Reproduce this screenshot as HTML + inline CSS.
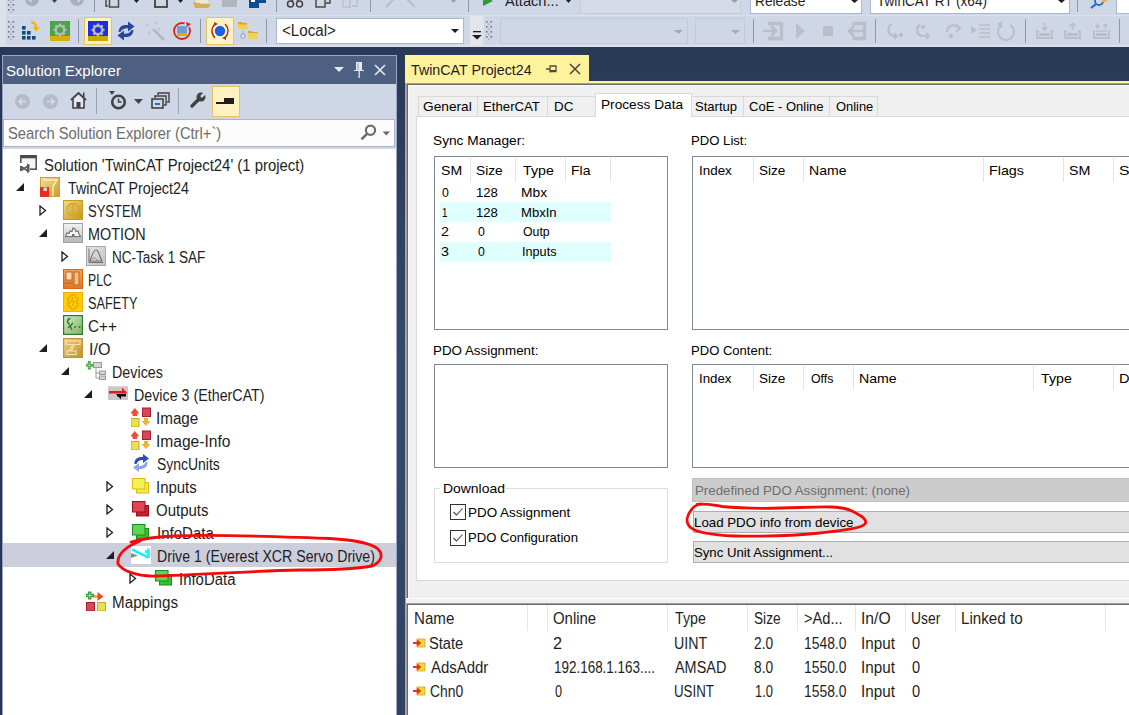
<!DOCTYPE html><html><head><meta charset="utf-8"><style>
html,body{margin:0;padding:0}body{width:1129px;height:715px;overflow:hidden;position:relative;background:linear-gradient(to bottom,#293955 30px,#35496A 360px,#35496A 480px,#314262 715px);font-family:"Liberation Sans",sans-serif}
.t{position:absolute;white-space:pre;line-height:1;}
.b{position:absolute;}
</style></head><body>
<div class="b" style="left:0px;top:0px;width:1129px;height:47px;background:#DCE0EB"></div>
<div class="b" style="left:6px;top:0px;width:574px;height:14.5px;background:#CFD6E5"></div>
<div class="b" style="left:588px;top:0px;width:541px;height:14.5px;background:#CFD6E5"></div>
<div class="b" style="left:6px;top:16px;width:464px;height:29px;background:#CFD6E5"></div>
<div class="b" style="left:470px;top:16px;width:12px;height:29px;background:#E2E5EE"></div>
<div class="b" style="left:484px;top:16px;width:645px;height:29px;background:#CFD6E5"></div>
<svg class="b" style="left:8px;top:-1px;" width="7" height="15" viewBox="0 0 7 15"><rect x="0" y="0" width="1.6" height="1.6" fill="#6F7890"/><rect x="4.5" y="0" width="1.6" height="1.6" fill="#6F7890"/><rect x="2.2" y="2.5" width="1.6" height="1.6" fill="#A9B0C2"/><rect x="0" y="5" width="1.6" height="1.6" fill="#6F7890"/><rect x="4.5" y="5" width="1.6" height="1.6" fill="#6F7890"/><rect x="2.2" y="7.5" width="1.6" height="1.6" fill="#A9B0C2"/><rect x="0" y="10" width="1.6" height="1.6" fill="#6F7890"/><rect x="4.5" y="10" width="1.6" height="1.6" fill="#6F7890"/><rect x="2.2" y="12.5" width="1.6" height="1.6" fill="#A9B0C2"/></svg>
<svg class="b" style="left:24px;top:-9px;" width="16" height="16" viewBox="0 0 16 16"><circle cx="8" cy="8" r="7" fill="#A9AFBB"/><path d="M12 8 H4.5 M7.5 5 L4.5 8 L7.5 11" stroke="#D3D8E2" stroke-width="1.8" fill="none"/></svg>
<svg class="b" style="left:52px;top:0px;" width="6" height="4" viewBox="0 0 6 4"><path d="M0 0 H5 L2.5 3 Z" fill="#424242"/></svg>
<svg class="b" style="left:69px;top:-9px;" width="16" height="16" viewBox="0 0 16 16"><circle cx="8" cy="8" r="7" fill="#A9AFBB"/><path d="M4 8 H11.5 M8.5 5 L11.5 8 L8.5 11" stroke="#D3D8E2" stroke-width="1.8" fill="none"/></svg>
<div class="b" style="left:94px;top:0px;width:1px;height:12px;background:#8E96A8"></div>
<svg class="b" style="left:105px;top:0px;" width="16" height="9" viewBox="0 0 16 9"><path d="M1 0 V6 H3" stroke="#424242" stroke-width="1.4" fill="none"/><rect x="4.5" y="-2" width="9" height="9" fill="#D3D6DE" stroke="#424242" stroke-width="1.4"/></svg>
<svg class="b" style="left:134px;top:0px;" width="6" height="4" viewBox="0 0 6 4"><path d="M0 0 H5 L2.5 3 Z" fill="#1E1E1E"/></svg>
<svg class="b" style="left:154px;top:-2px;" width="14" height="10" viewBox="0 0 14 10"><rect x="1" y="0" width="12" height="9" fill="#D3D6DE" stroke="#424242" stroke-width="1.8"/></svg>
<svg class="b" style="left:178px;top:0px;" width="6" height="4" viewBox="0 0 6 4"><path d="M0 0 H5 L2.5 3 Z" fill="#1E1E1E"/></svg>
<svg class="b" style="left:193px;top:-2px;" width="19" height="11" viewBox="0 0 19 11"><path d="M0 4 H6 L8 6 H18 L15 10 H2 Z" fill="#DDAA5A"/><rect x="3" y="0" width="12" height="5" fill="#EEE6D6"/></svg>
<svg class="b" style="left:222px;top:-2px;" width="15" height="10" viewBox="0 0 15 10"><rect x="0" y="0" width="15" height="9" fill="#B0B5C0"/></svg>
<svg class="b" style="left:249px;top:-2px;" width="18" height="11" viewBox="0 0 18 11"><rect x="0" y="0" width="10" height="10" fill="#0E4C92"/><rect x="2" y="0" width="4" height="4" fill="#FFFFFF"/><rect x="10" y="0" width="7" height="5" fill="#0E4C92"/></svg>
<div class="b" style="left:276px;top:0px;width:1px;height:12px;background:#8E96A8"></div>
<svg class="b" style="left:286px;top:-2px;" width="18" height="11" viewBox="0 0 18 11"><circle cx="4.5" cy="6" r="3" stroke="#424242" stroke-width="1.5" fill="none"/><circle cx="13.5" cy="6" r="3" stroke="#424242" stroke-width="1.5" fill="none"/><path d="M6 3 L9 -2 M12 3 L9 -2" stroke="#424242" stroke-width="1.5"/></svg>
<svg class="b" style="left:315px;top:-2px;" width="18" height="11" viewBox="0 0 18 11"><rect x="1" y="0" width="9" height="9" fill="#D3D6DE" stroke="#424242" stroke-width="1.4"/><path d="M11 5 H15 V-1" stroke="#424242" stroke-width="1.4" fill="none"/></svg>
<svg class="b" style="left:342px;top:-2px;" width="18" height="11" viewBox="0 0 18 11"><rect x="1" y="1" width="7" height="8" fill="none" stroke="#B8BDC8" stroke-width="1.3"/><path d="M10 8 H15 V0" stroke="#B8BDC8" stroke-width="1.3" fill="none"/></svg>
<div class="b" style="left:370px;top:0px;width:1px;height:12px;background:#8E96A8"></div>
<svg class="b" style="left:384px;top:-3px;" width="40" height="12" viewBox="0 0 40 12"><path d="M2 10 L10 2" stroke="#B8BDC8" stroke-width="2.2"/><path d="M23 2 L31 10" stroke="#B8BDC8" stroke-width="2.2"/><path d="M15 0 L19 0 L17 3 Z" fill="#9A9FAA"/></svg>
<svg class="b" style="left:451px;top:0px;" width="6" height="4" viewBox="0 0 6 4"><path d="M0 0 H5 L2.5 3 Z" fill="#9A9FAA"/></svg>
<div class="b" style="left:468px;top:0px;width:1px;height:12px;background:#8E96A8"></div>
<svg class="b" style="left:483px;top:-4px;" width="10" height="11" viewBox="0 0 10 11"><path d="M0 0 L10 5 L0 10 Z" fill="#2F9A35"/></svg>
<div class="t" style="left:504.60px;top:-6.70px;font-size:15px;color:#1E1E1E;transform:scaleX(0.9759);transform-origin:0 0;">Attach...</div>
<svg class="b" style="left:566px;top:0px;" width="6" height="4" viewBox="0 0 6 4"><path d="M0 0 H5 L2.5 3 Z" fill="#1E1E1E"/></svg>
<div class="b" style="left:580px;top:-1px;width:161px;height:15px;border:1px solid #C4CAD8;box-sizing:border-box;background:#D6DBE9"></div>
<svg class="b" style="left:731px;top:0px;" width="7" height="4" viewBox="0 0 7 4"><path d="M0 0 H7 L3.5 3 Z" fill="#9A9FAA"/></svg>
<div class="b" style="left:750px;top:-1px;width:112px;height:15px;border:1px solid #ABB6CF;box-sizing:border-box;background:#FFFFFF"></div>
<div class="t" style="left:754.69px;top:-6.70px;font-size:15px;color:#1E1E1E;transform:scaleX(0.9148);transform-origin:0 0;">Release</div>
<svg class="b" style="left:851px;top:0px;" width="7" height="4" viewBox="0 0 7 4"><path d="M0 0 H7 L3.5 3 Z" fill="#1E1E1E"/></svg>
<div class="b" style="left:870px;top:-1px;width:200px;height:15px;border:1px solid #ABB6CF;box-sizing:border-box;background:#FFFFFF"></div>
<div class="t" style="left:876.60px;top:-6.70px;font-size:15px;color:#1E1E1E;transform:scaleX(0.9058);transform-origin:0 0;">TwinCAT RT (x64)</div>
<svg class="b" style="left:1058px;top:0px;" width="7" height="4" viewBox="0 0 7 4"><path d="M0 0 H7 L3.5 3 Z" fill="#1E1E1E"/></svg>
<div class="b" style="left:1077px;top:0px;width:1px;height:12px;background:#8E96A8"></div>
<svg class="b" style="left:1089px;top:-3px;" width="18" height="12" viewBox="0 0 18 12"><circle cx="10" cy="4" r="4" stroke="#1E6FC8" stroke-width="1.8" fill="none"/><path d="M7 7 L2 11" stroke="#1E6FC8" stroke-width="2.2"/><rect x="13" y="-1" width="5" height="6" fill="#E8B94A"/></svg>
<div class="b" style="left:1116px;top:-1px;width:20px;height:15px;border:1px solid #ABB6CF;box-sizing:border-box;background:#FFFFFF"></div>
<svg class="b" style="left:8px;top:21px;" width="7" height="21" viewBox="0 0 7 21"><rect x="0" y="0" width="1.6" height="1.6" fill="#6F7890"/><rect x="4.5" y="0" width="1.6" height="1.6" fill="#6F7890"/><rect x="2.2" y="2.5" width="1.6" height="1.6" fill="#A9B0C2"/><rect x="0" y="5" width="1.6" height="1.6" fill="#6F7890"/><rect x="4.5" y="5" width="1.6" height="1.6" fill="#6F7890"/><rect x="2.2" y="7.5" width="1.6" height="1.6" fill="#A9B0C2"/><rect x="0" y="10" width="1.6" height="1.6" fill="#6F7890"/><rect x="4.5" y="10" width="1.6" height="1.6" fill="#6F7890"/><rect x="2.2" y="12.5" width="1.6" height="1.6" fill="#A9B0C2"/><rect x="0" y="15" width="1.6" height="1.6" fill="#6F7890"/><rect x="4.5" y="15" width="1.6" height="1.6" fill="#6F7890"/><rect x="2.2" y="17.5" width="1.6" height="1.6" fill="#A9B0C2"/></svg>
<svg class="b" style="left:21px;top:21px;" width="21" height="20" viewBox="0 0 21 20"><g fill="#0D4D7E"><rect x="1" y="5" width="3.6" height="3.6"/><rect x="1" y="10" width="3.6" height="3.6"/><rect x="6" y="10" width="3.6" height="3.6"/><rect x="1" y="15" width="3.6" height="3.6"/><rect x="6" y="15" width="3.6" height="3.6"/><rect x="11" y="15" width="3.6" height="3.6"/></g><path d="M10 1.5 C13 1 15 3 15 6.5" stroke="#F2B800" stroke-width="2.4" fill="none"/><path d="M11.5 6 H19 L15.2 10.5 Z" fill="#F2B800"/></svg>
<svg class="b" style="left:50px;top:21px;" width="20" height="20" viewBox="0 0 20 20"><rect x="0" y="0" width="20" height="20" fill="#45A845"/><rect x="0" y="15" width="20" height="5" fill="#D6B100"/><rect x="8.8" y="2.5" width="2.4" height="3" fill="#B8B8B8" transform="rotate(0 10 9)"/><rect x="8.8" y="2.5" width="2.4" height="3" fill="#B8B8B8" transform="rotate(45 10 9)"/><rect x="8.8" y="2.5" width="2.4" height="3" fill="#B8B8B8" transform="rotate(90 10 9)"/><rect x="8.8" y="2.5" width="2.4" height="3" fill="#B8B8B8" transform="rotate(135 10 9)"/><rect x="8.8" y="2.5" width="2.4" height="3" fill="#B8B8B8" transform="rotate(180 10 9)"/><rect x="8.8" y="2.5" width="2.4" height="3" fill="#B8B8B8" transform="rotate(225 10 9)"/><rect x="8.8" y="2.5" width="2.4" height="3" fill="#B8B8B8" transform="rotate(270 10 9)"/><rect x="8.8" y="2.5" width="2.4" height="3" fill="#B8B8B8" transform="rotate(315 10 9)"/><circle cx="10" cy="9" r="4.2" fill="none" stroke="#B8B8B8" stroke-width="2.4"/></svg>
<div class="b" style="left:78px;top:19px;width:1px;height:24px;background:#8E96A8"></div>
<div class="b" style="left:84px;top:17px;width:28px;height:28px;background:#FFF3C4;border:1px solid #E5C365;box-sizing:border-box"></div>
<svg class="b" style="left:88px;top:21px;" width="20" height="20" viewBox="0 0 20 20"><rect x="0" y="0" width="20" height="20" fill="#1C2EE8"/><rect x="0" y="15" width="20" height="5" fill="#C9A800"/><rect x="8.8" y="2.5" width="2.4" height="3" fill="#B8B8B8" transform="rotate(0 10 9)"/><rect x="8.8" y="2.5" width="2.4" height="3" fill="#B8B8B8" transform="rotate(45 10 9)"/><rect x="8.8" y="2.5" width="2.4" height="3" fill="#B8B8B8" transform="rotate(90 10 9)"/><rect x="8.8" y="2.5" width="2.4" height="3" fill="#B8B8B8" transform="rotate(135 10 9)"/><rect x="8.8" y="2.5" width="2.4" height="3" fill="#B8B8B8" transform="rotate(180 10 9)"/><rect x="8.8" y="2.5" width="2.4" height="3" fill="#B8B8B8" transform="rotate(225 10 9)"/><rect x="8.8" y="2.5" width="2.4" height="3" fill="#B8B8B8" transform="rotate(270 10 9)"/><rect x="8.8" y="2.5" width="2.4" height="3" fill="#B8B8B8" transform="rotate(315 10 9)"/><circle cx="10" cy="9" r="4.2" fill="none" stroke="#B8B8B8" stroke-width="2.4"/></svg>
<svg class="b" style="left:117px;top:21px;" width="18" height="20" viewBox="0 0 18 20"><path d="M1.5 11 C2 5 6 3.5 11 4 L11 0.5 L17.5 5.5 L11 10.5 L11 7.2 C7.5 7 5 8 3.5 11 Z" fill="#26479E"/><path d="M16.5 9 C16 15 12 16.5 7 16 L7 19.5 L0.5 14.5 L7 9.5 L7 12.8 C10.5 13 13 12 14.5 9 Z" fill="#26479E"/></svg>
<svg class="b" style="left:145px;top:21px;" width="20" height="20" viewBox="0 0 20 20"><path d="M8 8 L19 19" stroke="#B3B8C3" stroke-width="2.6"/><g stroke="#C3C8D2" stroke-width="1.3"><path d="M2 2 V6 M0 4 H4"/><path d="M11 0 V4 M9 2 H13"/><path d="M14 6 V10 M12 8 H16"/><path d="M4 10 V14 M2 12 H6"/></g></svg>
<svg class="b" style="left:172px;top:21px;" width="21" height="20" viewBox="0 0 21 20"><circle cx="10" cy="10" r="8" stroke="#E02020" stroke-width="1.8" fill="none" stroke-dasharray="40 6"/><path d="M14 1 L19 3 L15 6 Z" fill="#E02020"/><rect x="5" y="5" width="10" height="10" fill="#6E9ED6"/><rect x="5" y="12" width="10" height="3" fill="#D6B100"/></svg>
<div class="b" style="left:200px;top:19px;width:1px;height:24px;background:#8E96A8"></div>
<div class="b" style="left:206px;top:17px;width:28px;height:28px;background:#FFF3C4;border:1px solid #E5C365;box-sizing:border-box"></div>
<svg class="b" style="left:210px;top:21px;" width="20" height="20" viewBox="0 0 20 20"><circle cx="10" cy="10" r="5.2" fill="#1F62D8"/><path d="M5 3 C1 7 1 13 5 17 M15 3 C19 7 19 13 15 17" stroke="#B0281E" stroke-width="1.4" fill="none"/><path d="M4 1 L8 3 L4 5 Z M16 19 L12 17 L16 15 Z" fill="#B0281E"/></svg>
<svg class="b" style="left:238px;top:21px;" width="21" height="20" viewBox="0 0 21 20"><path d="M0 1 H4 L5 2 H9 V8 H0 Z" fill="#D9A832"/><path d="M0 3.5 H10 L8.5 8 H0 Z" fill="#F5CE5A"/><path d="M5 9 V13 M3 15 H7" stroke="#A5ABB8" stroke-width="0.9" fill="none"/><circle cx="5" cy="15" r="2.2" fill="#E2E5EC" stroke="#7C8BB0" stroke-width="0.8"/><path d="M10 10 H14 L15 11 H20 V18 H10 Z" fill="#D9A832"/><path d="M10 12 H20 V18 H10 Z" fill="#F2D060"/></svg>
<div class="b" style="left:266px;top:19px;width:1px;height:24px;background:#8E96A8"></div>
<div class="b" style="left:276px;top:18px;width:188px;height:26px;border:1px solid #ABB6CF;box-sizing:border-box;background:#FFFFFF"></div>
<div class="t" style="left:281.65px;top:23.46px;font-size:16px;color:#1E1E1E;transform:scaleX(0.9455);transform-origin:0 0;">&lt;Local&gt;</div>
<svg class="b" style="left:451px;top:29px;" width="8" height="5" viewBox="0 0 8 5"><path d="M0 0 H8 L4 4 Z" fill="#1E1E1E"/></svg>
<svg class="b" style="left:472px;top:31px;" width="11" height="9" viewBox="0 0 11 9"><rect x="1" y="0" width="8" height="1.3" fill="#1E1E1E"/><path d="M0 4 H10 L5 8.5 Z" fill="#1E1E1E"/></svg>
<svg class="b" style="left:486px;top:21px;" width="7" height="21" viewBox="0 0 7 21"><rect x="0" y="0" width="1.6" height="1.6" fill="#6F7890"/><rect x="4.5" y="0" width="1.6" height="1.6" fill="#6F7890"/><rect x="2.2" y="2.5" width="1.6" height="1.6" fill="#A9B0C2"/><rect x="0" y="5" width="1.6" height="1.6" fill="#6F7890"/><rect x="4.5" y="5" width="1.6" height="1.6" fill="#6F7890"/><rect x="2.2" y="7.5" width="1.6" height="1.6" fill="#A9B0C2"/><rect x="0" y="10" width="1.6" height="1.6" fill="#6F7890"/><rect x="4.5" y="10" width="1.6" height="1.6" fill="#6F7890"/><rect x="2.2" y="12.5" width="1.6" height="1.6" fill="#A9B0C2"/><rect x="0" y="15" width="1.6" height="1.6" fill="#6F7890"/><rect x="4.5" y="15" width="1.6" height="1.6" fill="#6F7890"/><rect x="2.2" y="17.5" width="1.6" height="1.6" fill="#A9B0C2"/></svg>
<div class="b" style="left:500px;top:18px;width:188px;height:26px;border:1px solid #C4CAD8;box-sizing:border-box"></div>
<svg class="b" style="left:674px;top:30px;" width="9" height="5" viewBox="0 0 9 5"><path d="M0 0 H9 L4.5 4 Z" fill="#A3A9B5"/></svg>
<div class="b" style="left:695px;top:18px;width:50px;height:26px;border:1px solid #C4CAD8;box-sizing:border-box"></div>
<svg class="b" style="left:731px;top:30px;" width="9" height="5" viewBox="0 0 9 5"><path d="M0 0 H9 L4.5 4 Z" fill="#A3A9B5"/></svg>
<div class="b" style="left:753px;top:19px;width:1px;height:24px;background:#8E96A8"></div>
<svg class="b" style="left:763px;top:21px;" width="21" height="20" viewBox="0 0 21 20"><path d="M0 10 H12 M8 5 L13 10 L8 15" stroke="#B9BEC9" stroke-width="2.6" fill="none"/><path d="M5 2.5 H18.5 V17.5 H5" stroke="#B9BEC9" stroke-width="3.4" fill="none"/></svg>
<svg class="b" style="left:796px;top:22px;" width="10" height="18" viewBox="0 0 10 18"><path d="M0 1 L9 9 L0 17 Z" fill="#B9BEC9"/></svg>
<svg class="b" style="left:823px;top:26px;" width="11" height="11" viewBox="0 0 11 11"><rect x="0" y="0" width="10" height="10" fill="#B9BEC9"/></svg>
<svg class="b" style="left:846px;top:21px;" width="21" height="20" viewBox="0 0 21 20"><path d="M17 10 H3 M8 5 L3 10 L8 15" stroke="#B9BEC9" stroke-width="2.6" fill="none"/><path d="M6.5 2.5 H18.5 V17.5 H6.5" stroke="#B9BEC9" stroke-width="3.4" fill="none"/></svg>
<div class="b" style="left:875px;top:19px;width:1px;height:24px;background:#8E96A8"></div>
<svg class="b" style="left:885px;top:22px;" width="20" height="18" viewBox="0 0 20 18"><path d="M7 2 C2 4 2 12 8 14 L11 14" stroke="#B9BEC9" stroke-width="2.2" fill="none"/><path d="M9 11 L12 14 L9 17" stroke="#B9BEC9" stroke-width="1.8" fill="none"/><circle cx="16" cy="13" r="2.2" fill="#B9BEC9"/></svg>
<svg class="b" style="left:914px;top:22px;" width="20" height="18" viewBox="0 0 20 18"><path d="M6 3 C1 6 3 14 9 14 L14 14" stroke="#B9BEC9" stroke-width="2.2" fill="none"/><path d="M12 11 L15 14 L12 17" stroke="#B9BEC9" stroke-width="1.8" fill="none"/><circle cx="9" cy="5" r="2.2" fill="#B9BEC9"/></svg>
<svg class="b" style="left:944px;top:22px;" width="20" height="18" viewBox="0 0 20 18"><path d="M15 6 C10 1 3 4 3 10" stroke="#B9BEC9" stroke-width="2.2" fill="none"/><path d="M12 2 L16 6 L12 10" stroke="#B9BEC9" stroke-width="1.8" fill="none"/><circle cx="7" cy="14" r="2.2" fill="#B9BEC9"/></svg>
<svg class="b" style="left:971px;top:23px;" width="20" height="16" viewBox="0 0 20 16"><path d="M0 3 L6 7 L0 11 Z" fill="#B9BEC9"/><path d="M8 2 H19 M8 6 H19 M8 10 H19 M8 14 H19" stroke="#B9BEC9" stroke-width="1.6"/></svg>
<svg class="b" style="left:996px;top:21px;" width="20" height="20" viewBox="0 0 20 20"><path d="M6 4 A8 8 0 1 0 14 4" stroke="#B9BEC9" stroke-width="2" fill="none"/><path d="M6 0 L6 7 L1 3 Z" fill="#B9BEC9"/></svg>
<div class="b" style="left:1025px;top:19px;width:1px;height:24px;background:#8E96A8"></div>
<svg class="b" style="left:1036px;top:23px;" width="17" height="16" viewBox="0 0 17 16"><path d="M8.5 0 V6.5 M5.5 4 L8.5 7 L11.5 4" stroke="#B9BEC9" stroke-width="1.7" fill="none"/><path d="M1 7.5 L3 9 M16 7.5 L14 9" stroke="#B9BEC9" stroke-width="1.2"/><path d="M1 7.5 V15 H16 V7.5" stroke="#B9BEC9" stroke-width="1.8" fill="none"/><rect x="3" y="10" width="11" height="3" fill="#B9BEC9"/></svg>
<svg class="b" style="left:1064px;top:23px;" width="17" height="16" viewBox="0 0 17 16"><path d="M8.5 7 V1 M5.5 3.5 L8.5 0.5 L11.5 3.5" stroke="#B9BEC9" stroke-width="1.7" fill="none"/><path d="M1 7.5 L3 9 M16 7.5 L14 9" stroke="#B9BEC9" stroke-width="1.2"/><path d="M1 7.5 V15 H16 V7.5" stroke="#B9BEC9" stroke-width="1.8" fill="none"/><rect x="3" y="10" width="11" height="3" fill="#B9BEC9"/></svg>
<svg class="b" style="left:1093px;top:23px;" width="17" height="16" viewBox="0 0 17 16"><path d="M4.5 0 V5 M2.5 3 L4.5 5 L6.5 3 M12.5 6 V1 M10.5 3 L12.5 1 L14.5 3" stroke="#B9BEC9" stroke-width="1.4" fill="none"/><rect x="3" y="7.5" width="11" height="1.3" fill="#B9BEC9"/><path d="M1 7.5 V15 H16 V7.5" stroke="#B9BEC9" stroke-width="1.8" fill="none"/><rect x="3" y="10" width="11" height="3" fill="#B9BEC9"/></svg>
<div class="b" style="left:1119px;top:19px;width:1px;height:24px;background:#8E96A8"></div>
<div class="b" style="left:0px;top:47px;width:2px;height:668px;background:linear-gradient(to right,#293955 1px,#243150 1px)"></div>
<div class="b" style="left:2px;top:55px;width:395px;height:660px;background:#9AA6C7"></div>
<div class="b" style="left:3px;top:56px;width:393px;height:28px;background:#4D6082"></div>
<div class="t" style="left:6.29px;top:63.30px;font-size:15px;color:#FFFFFF;transform:scaleX(1.0062);transform-origin:0 0;">Solution Explorer</div>
<svg class="b" style="left:333px;top:66px;" width="12" height="8" viewBox="0 0 12 8"><path d="M1 1 H11 L6 6 Z" fill="#E6E9F0"/></svg>
<svg class="b" style="left:352px;top:61px;" width="14" height="18" viewBox="0 0 14 18"><path d="M4 1 H10 V9 H12 V10 H2 V9 H4 Z" fill="#E6E9F0"/><rect x="6.5" y="10" width="1.3" height="7" fill="#E6E9F0"/><rect x="5" y="2" width="2" height="7" fill="#B9C1D3"/></svg>
<svg class="b" style="left:373px;top:63px;" width="14" height="14" viewBox="0 0 14 14"><path d="M2 2 L12 12 M12 2 L2 12" stroke="#E6E9F0" stroke-width="1.6"/></svg>
<div class="b" style="left:3px;top:84px;width:393px;height:65px;background:#CFD6E5"></div>
<svg class="b" style="left:14px;top:93px;" width="17" height="17" viewBox="0 0 17 17"><circle cx="8.5" cy="8.5" r="7.5" fill="#B5BBC8"/><path d="M12 8.5 H5 M8 5.5 L5 8.5 L8 11.5" stroke="#D9DDE6" stroke-width="1.6" fill="none"/></svg>
<svg class="b" style="left:42px;top:93px;" width="17" height="17" viewBox="0 0 17 17"><circle cx="8.5" cy="8.5" r="7.5" fill="#B5BBC8"/><path d="M5 8.5 H12 M9 5.5 L12 8.5 L9 11.5" stroke="#D9DDE6" stroke-width="1.6" fill="none"/></svg>
<svg class="b" style="left:69px;top:91px;" width="19" height="19" viewBox="0 0 19 19"><path d="M4 8.5 L9.5 3.5 L15 8.5 V17 H4 Z" fill="#E6E6EE"/><path d="M2 9 L9.5 2 L17 9" stroke="#424242" stroke-width="1.8" fill="none"/><path d="M4 8 V17 H15 V8" stroke="#424242" stroke-width="1.6" fill="none"/><rect x="7.5" y="11" width="4" height="6" fill="#424242"/><rect x="14" y="1.5" width="1.5" height="5" fill="#424242"/></svg>
<div class="b" style="left:96px;top:88px;width:1px;height:26px;background:#98A2B8"></div>
<svg class="b" style="left:107px;top:90px;" width="22" height="22" viewBox="0 0 22 22"><path d="M2 1 H8 L5 5 Z" fill="#424242"/><circle cx="11.5" cy="12" r="6.3" stroke="#424242" stroke-width="2.6" fill="none"/><path d="M11.5 8.5 V12 H14.5" stroke="#424242" stroke-width="1.5" fill="none"/></svg>
<svg class="b" style="left:134px;top:99px;" width="9" height="6" viewBox="0 0 9 6"><path d="M0 0 H9 L4.5 5 Z" fill="#424242"/></svg>
<svg class="b" style="left:151px;top:92px;" width="19" height="17" viewBox="0 0 19 17"><rect x="1" y="7" width="11" height="9" fill="none" stroke="#424242" stroke-width="1.6"/><path d="M4 6 V4 H15 V13 H13" fill="none" stroke="#424242" stroke-width="1.4"/><path d="M7 3 V1 H18 V10 H16" fill="none" stroke="#424242" stroke-width="1.4"/><rect x="4" y="11" width="5" height="2" fill="#1E6FC8"/></svg>
<div class="b" style="left:178px;top:88px;width:1px;height:26px;background:#98A2B8"></div>
<svg class="b" style="left:189px;top:91px;" width="18" height="18" viewBox="0 0 18 18"><path d="M3 15 L9 9" stroke="#424242" stroke-width="3.4" stroke-linecap="round"/><circle cx="12" cy="6" r="4.5" fill="#424242"/><path d="M12 6 L17 1" stroke="#CFD6E5" stroke-width="2.6"/></svg>
<div class="b" style="left:212px;top:86px;width:28px;height:31px;background:#FFF3C4;border:1px solid #E5C365;box-sizing:border-box"></div>
<svg class="b" style="left:216px;top:98px;" width="20" height="8" viewBox="0 0 20 8"><rect x="0" y="4" width="9" height="2" fill="#1E1E1E"/><rect x="8" y="0" width="10" height="6" fill="#1E1E1E"/></svg>
<div class="b" style="left:3px;top:119px;width:392px;height:28px;background:#FCFCFC;border:1px solid #A9B4CB;box-sizing:border-box"></div>
<div class="t" style="left:8.38px;top:125.96px;font-size:16px;color:#6D6D6D;transform:scaleX(0.9204);transform-origin:0 0;">Search Solution Explorer (Ctrl+`)</div>
<svg class="b" style="left:358px;top:123px;" width="20" height="20" viewBox="0 0 20 20"><circle cx="12.5" cy="7.3" r="4.6" stroke="#6B6B6B" stroke-width="2.2" fill="none"/><path d="M9.2 10.6 L3.5 16.3" stroke="#6B6B6B" stroke-width="2.6"/></svg>
<svg class="b" style="left:382px;top:131px;" width="9" height="6" viewBox="0 0 9 6"><path d="M0.5 0.5 H8 L4.25 4.5 Z" fill="#6B6B6B"/></svg>
<div class="b" style="left:3px;top:149px;width:393px;height:566px;background:#FFFFFF"></div>
<div class="b" style="left:3px;top:543px;width:393px;height:24px;background:#CCCEDB"></div>
<svg class="b" style="left:19px;top:155px;" width="20" height="20" viewBox="0 0 20 20"><rect x="1" y="0.5" width="17" height="14.5" fill="#F6F6F6"/><rect x="1" y="0" width="17" height="3.3" fill="#4A4A4A"/><rect x="1" y="0" width="1.6" height="8" fill="#555"/><rect x="16.4" y="0" width="1.6" height="15" fill="#555"/><rect x="11" y="13.4" width="7" height="1.6" fill="#555"/><rect x="0" y="8" width="11" height="10" fill="#FFFFFF"/><rect x="1" y="11" width="2" height="5" fill="#5A5A5A"/><path d="M8 8.5 L10.5 9.5 V17 L8 18 Z" fill="#5A5A5A"/><path d="M2 11.5 L9 16 M2 15.5 L9 11" stroke="#5A5A5A" stroke-width="1.7"/></svg>
<div class="t" style="left:43.57px;top:157.56px;font-size:16px;color:#1E1E1E;transform:scaleX(0.9283);transform-origin:0 0;">Solution 'TwinCAT Project24' (1 project)</div>
<svg class="b" style="left:16px;top:183px;" width="9" height="9" viewBox="0 0 9 9"><path d="M8 0 V8 H0 Z" fill="#1E1E1E"/></svg>
<svg class="b" style="left:40px;top:177px;" width="20" height="20" viewBox="0 0 20 20"><defs><linearGradient id="gp" x1="0" y1="0" x2="1" y2="1"><stop offset="0" stop-color="#F4E2A0"/><stop offset="1" stop-color="#C39A25"/></linearGradient></defs><rect x="0" y="0" width="20" height="20" fill="url(#gp)"/><rect x="0.5" y="0.5" width="19" height="19" fill="none" stroke="#C9A23C" stroke-width="1"/><path d="M3 3 H17 L13 9 V19" stroke="#FBF0C8" stroke-width="1.5" fill="none" opacity="0.85"/><path d="M3 3 V6 H14" stroke="#E8CF7A" stroke-width="1" fill="none"/><rect x="0" y="10" width="9" height="10" fill="#E3301E"/><rect x="3.5" y="10.5" width="3.5" height="3.5" fill="#F4D0C8"/></svg>
<div class="t" style="left:68.00px;top:180.56px;font-size:16px;color:#1E1E1E;transform:scaleX(0.8919);transform-origin:0 0;">TwinCAT Project24</div>
<svg class="b" style="left:39px;top:205px;" width="8" height="11" viewBox="0 0 8 11"><path d="M1 1 L6.5 5.5 L1 10 Z" fill="none" stroke="#1E1E1E" stroke-width="1.3"/></svg>
<svg class="b" style="left:63px;top:200px;" width="20" height="20" viewBox="0 0 20 20"><defs><linearGradient id="gs" x1="0" y1="0" x2="1" y2="1"><stop offset="0" stop-color="#F3DC8A"/><stop offset="1" stop-color="#C4930F"/></linearGradient></defs><rect x="0" y="0" width="20" height="20" fill="url(#gs)"/><rect x="0.5" y="0.5" width="19" height="19" fill="none" stroke="#C99A1E" stroke-width="1"/><circle cx="10" cy="9.5" r="6" fill="none" stroke="#D2A631" stroke-width="1.3"/><path d="M10 3 V16 M7 6 L10 9 L7 12" stroke="#D2A631" stroke-width="1" fill="none"/></svg>
<div class="t" style="left:88.39px;top:203.56px;font-size:16px;color:#1E1E1E;transform:scaleX(0.8109);transform-origin:0 0;">SYSTEM</div>
<svg class="b" style="left:39px;top:229px;" width="9" height="9" viewBox="0 0 9 9"><path d="M8 0 V8 H0 Z" fill="#1E1E1E"/></svg>
<svg class="b" style="left:63px;top:223px;" width="20" height="20" viewBox="0 0 20 20"><defs><linearGradient id="gm" x1="0" y1="0" x2="0" y2="1"><stop offset="0" stop-color="#F2F2F2"/><stop offset="1" stop-color="#C4C4C4"/></linearGradient></defs><rect x="0" y="0" width="20" height="20" fill="url(#gm)"/><rect x="0.5" y="0.5" width="19" height="19" fill="none" stroke="#A0A0A0"/><path d="M2.5 13.5 L4 10 L6 10.5 L7 8 L9 8.5 L10 5 L12 6 L13 8.5 L15 8 L16 11 L17.5 13.5 Z" fill="#F4F4F4" stroke="#707070" stroke-width="1.1"/><rect x="9" y="11" width="2.5" height="2.5" fill="#707070"/><rect x="1" y="14" width="18" height="5" fill="#BDBDBD"/></svg>
<div class="t" style="left:88.30px;top:226.56px;font-size:16px;color:#1E1E1E;transform:scaleX(0.9000);transform-origin:0 0;">MOTION</div>
<svg class="b" style="left:61px;top:251px;" width="8" height="11" viewBox="0 0 8 11"><path d="M1 1 L6.5 5.5 L1 10 Z" fill="none" stroke="#1E1E1E" stroke-width="1.3"/></svg>
<svg class="b" style="left:86px;top:246px;" width="20" height="20" viewBox="0 0 20 20"><defs><linearGradient id="gn" x1="0" y1="0" x2="1" y2="1"><stop offset="0" stop-color="#E6E6E6"/><stop offset="1" stop-color="#C2C2C2"/></linearGradient></defs><rect x="0" y="0" width="20" height="20" fill="url(#gn)"/><rect x="0.5" y="0.5" width="19" height="19" fill="none" stroke="#A8A8A8"/><path d="M3 2.5 V16.5 H17" fill="none" stroke="#6E6E6E" stroke-width="1"/><path d="M4 15 C6 10 7 4 10 4 C13 4 13 10 16 15 Z" fill="#D4D4D4" stroke="#6E6E6E" stroke-width="1.1"/><path d="M6 13 C8 11 10 12 12 15" stroke="#8A8A8A" stroke-width="1" fill="none"/></svg>
<div class="t" style="left:112.25px;top:249.56px;font-size:16px;color:#1E1E1E;transform:scaleX(0.8459);transform-origin:0 0;">NC-Task 1 SAF</div>
<svg class="b" style="left:63px;top:269px;" width="20" height="20" viewBox="0 0 20 20"><defs><linearGradient id="gpl" x1="0" y1="0" x2="0" y2="1"><stop offset="0" stop-color="#F5A35C"/><stop offset="1" stop-color="#DE7624"/></linearGradient></defs><rect x="0" y="0" width="20" height="20" fill="url(#gpl)"/><rect x="0.5" y="0.5" width="19" height="19" fill="none" stroke="#D06A18"/><rect x="3" y="3" width="6" height="8" fill="#FBE0C0" stroke="#C9641A" stroke-width="1"/><rect x="11" y="3" width="5" height="13" fill="#F7C08A" stroke="#C9641A" stroke-width="1"/><path d="M1 14 H11" stroke="#C9641A" stroke-width="1"/></svg>
<div class="t" style="left:88.43px;top:272.56px;font-size:16px;color:#1E1E1E;transform:scaleX(0.7655);transform-origin:0 0;">PLC</div>
<svg class="b" style="left:63px;top:292px;" width="20" height="20" viewBox="0 0 20 20"><rect x="0" y="0" width="20" height="20" fill="#FFCC00"/><rect x="0.5" y="0.5" width="19" height="19" fill="none" stroke="#F0B000"/><path d="M8 3 H12 L12.5 5 L15 6 L15 8.5 L13 10 L15 11.5 V14 L12.5 15 L12 17 H8 L7.5 15 L5 14 V11.5 L7 10 L5 8.5 V6 L7.5 5 Z" fill="none" stroke="#E0A000" stroke-width="1.1"/><path d="M10 5 L8.5 9 H11 L9.5 14" stroke="#E0A000" stroke-width="1" fill="none"/></svg>
<div class="t" style="left:88.41px;top:295.56px;font-size:16px;color:#1E1E1E;transform:scaleX(0.7934);transform-origin:0 0;">SAFETY</div>
<svg class="b" style="left:63px;top:315px;" width="20" height="20" viewBox="0 0 20 20"><defs><linearGradient id="gc" x1="0" y1="0" x2="1" y2="1"><stop offset="0" stop-color="#D4EBC4"/><stop offset="1" stop-color="#7DB565"/></linearGradient></defs><rect x="0" y="0" width="20" height="20" fill="#2F7A30"/><rect x="1.2" y="1.2" width="17.6" height="17.6" fill="url(#gc)"/><path d="M7.5 3.5 C4 3.5 3.5 9 7 9" stroke="#2F7A30" stroke-width="1.6" fill="none"/><path d="M5 13 L10 8 M7 10 L9 15" stroke="#2F7A30" stroke-width="1.4" fill="none"/><circle cx="12" cy="12" r="1" fill="#2F7A30"/><circle cx="16.5" cy="12" r="1" fill="#2F7A30"/></svg>
<div class="t" style="left:88.25px;top:318.56px;font-size:16px;color:#1E1E1E;transform:scaleX(0.9517);transform-origin:0 0;">C++</div>
<svg class="b" style="left:39px;top:344px;" width="9" height="9" viewBox="0 0 9 9"><path d="M8 0 V8 H0 Z" fill="#1E1E1E"/></svg>
<svg class="b" style="left:63px;top:338px;" width="20" height="20" viewBox="0 0 20 20"><defs><linearGradient id="gi" x1="0" y1="0" x2="1" y2="1"><stop offset="0" stop-color="#EED08A"/><stop offset="1" stop-color="#C09027"/></linearGradient></defs><rect x="0" y="0" width="20" height="20" fill="url(#gi)"/><rect x="0.5" y="0.5" width="19" height="19" fill="none" stroke="#C29530"/><path d="M3 3 H17 V6.5 H12 L8 13 H13 V16.5 H4 V13 H6 L10 6.5 H3 Z" fill="none" stroke="#F8E7B4" stroke-width="1.1"/></svg>
<div class="t" style="left:88.70px;top:341.56px;font-size:16px;color:#1E1E1E;transform:scaleX(1.0050);transform-origin:0 0;">I/O</div>
<svg class="b" style="left:61px;top:367px;" width="9" height="9" viewBox="0 0 9 9"><path d="M8 0 V8 H0 Z" fill="#1E1E1E"/></svg>
<svg class="b" style="left:86px;top:361px;" width="20" height="20" viewBox="0 0 20 20"><rect x="7.5" y="1.5" width="8" height="5" fill="#D4D4D4" stroke="#9A9A9A" stroke-width="1"/><path d="M10 6.5 V17 H13.5 M10 12 H13.5" stroke="#9A9A9A" stroke-width="1" fill="none"/><rect x="13.5" y="10" width="6" height="3.5" fill="#D4D4D4" stroke="#9A9A9A" stroke-width="1"/><rect x="13.5" y="15" width="6" height="3.5" fill="#D4D4D4" stroke="#9A9A9A" stroke-width="1"/><path d="M-0.9 4.2 H7.5 M3.3 0 V8.4" stroke="#4FA84A" stroke-width="3"/><path d="M0.5 4.2 H6 M3.3 1.5 V7" stroke="#9ED498" stroke-width="0.8"/></svg>
<div class="t" style="left:111.91px;top:364.56px;font-size:16px;color:#1E1E1E;transform:scaleX(0.8946);transform-origin:0 0;">Devices</div>
<svg class="b" style="left:84px;top:390px;" width="9" height="9" viewBox="0 0 9 9"><path d="M8 0 V8 H0 Z" fill="#1E1E1E"/></svg>
<svg class="b" style="left:108px;top:384px;" width="20" height="20" viewBox="0 0 20 20"><rect x="0" y="2.3" width="20" height="13.7" fill="#C8C8C8"/><path d="M1 7 H18 V9.5 H1 Z M14 3.8 L19.5 9.5 H14 Z" fill="#F5101A"/><path d="M9 10 H18 V12.5 H9 Z M8 10 H13 V15.5 Z" fill="#0A0A0A"/></svg>
<div class="t" style="left:134.01px;top:387.56px;font-size:16px;color:#1E1E1E;transform:scaleX(0.8917);transform-origin:0 0;">Device 3 (EtherCAT)</div>
<svg class="b" style="left:131px;top:407px;" width="20" height="20" viewBox="0 0 20 20"><path d="M-0.8 6.5 L3.8 1 L8.4 6.5 H6 V9 H1.6 V6.5 Z" fill="#F04A30"/><rect x="11.5" y="1" width="8" height="8.5" fill="#D64856" stroke="#A02030" stroke-width="1"/><rect x="0" y="11.5" width="8" height="8.5" fill="#E9E24E" stroke="#CFA530" stroke-width="1"/><path d="M13 11 H17 V14 H19.5 L15 19 L10.5 14 H13 Z" fill="#F4B02E"/></svg>
<div class="t" style="left:156.45px;top:410.56px;font-size:16px;color:#1E1E1E;transform:scaleX(0.9512);transform-origin:0 0;">Image</div>
<svg class="b" style="left:131px;top:430px;" width="20" height="20" viewBox="0 0 20 20"><path d="M-0.8 6.5 L3.8 1 L8.4 6.5 H6 V9 H1.6 V6.5 Z" fill="#F04A30"/><rect x="11.5" y="1" width="8" height="8.5" fill="#D64856" stroke="#A02030" stroke-width="1"/><rect x="0" y="11.5" width="8" height="8.5" fill="#E9E24E" stroke="#CFA530" stroke-width="1"/><path d="M13 11 H17 V14 H19.5 L15 19 L10.5 14 H13 Z" fill="#F4B02E"/></svg>
<div class="t" style="left:156.43px;top:433.56px;font-size:16px;color:#1E1E1E;transform:scaleX(0.9733);transform-origin:0 0;">Image-Info</div>
<svg class="b" style="left:131px;top:453px;" width="20" height="20" viewBox="0 0 20 20"><path d="M3.5 11 C3 6 7 3.5 12 4 L12 1 L18 5.5 L12 10 L12 7 C9 6.8 6.5 8 5.5 11 Z" fill="#2A4FAE"/><path d="M16.5 9 C17 14 13 16.5 8 16 L8 19 L2 14.5 L8 10 L8 13 C11 13.2 13.5 12 14.5 9 Z" fill="#8FA5E0"/></svg>
<div class="t" style="left:156.53px;top:456.56px;font-size:16px;color:#1E1E1E;transform:scaleX(0.8718);transform-origin:0 0;">SyncUnits</div>
<svg class="b" style="left:106px;top:481px;" width="8" height="11" viewBox="0 0 8 11"><path d="M1 1 L6.5 5.5 L1 10 Z" fill="none" stroke="#1E1E1E" stroke-width="1.3"/></svg>
<svg class="b" style="left:131px;top:476px;" width="20" height="20" viewBox="0 0 20 20"><rect x="5.5" y="6.5" width="12" height="10.5" fill="#F6E94A" stroke="#E2B610" stroke-width="1"/><rect x="1.5" y="2.5" width="12.5" height="10.5" fill="#EFF258" stroke="#E2B610" stroke-width="1"/></svg>
<div class="t" style="left:156.47px;top:479.56px;font-size:16px;color:#1E1E1E;transform:scaleX(0.9333);transform-origin:0 0;">Inputs</div>
<svg class="b" style="left:106px;top:504px;" width="8" height="11" viewBox="0 0 8 11"><path d="M1 1 L6.5 5.5 L1 10 Z" fill="none" stroke="#1E1E1E" stroke-width="1.3"/></svg>
<svg class="b" style="left:131px;top:499px;" width="20" height="20" viewBox="0 0 20 20"><rect x="5.5" y="6.5" width="12" height="10.5" fill="#C8202C" stroke="#9A1020" stroke-width="1"/><rect x="1.5" y="2.5" width="12.5" height="10.5" fill="#DE4656" stroke="#9A1020" stroke-width="1"/></svg>
<div class="t" style="left:156.46px;top:502.56px;font-size:16px;color:#1E1E1E;transform:scaleX(0.9364);transform-origin:0 0;">Outputs</div>
<svg class="b" style="left:106px;top:527px;" width="8" height="11" viewBox="0 0 8 11"><path d="M1 1 L6.5 5.5 L1 10 Z" fill="none" stroke="#1E1E1E" stroke-width="1.3"/></svg>
<svg class="b" style="left:131px;top:522px;" width="20" height="20" viewBox="0 0 20 20"><rect x="5.5" y="6.5" width="12" height="10.5" fill="#36C030" stroke="#1E8A1E" stroke-width="1"/><rect x="1.5" y="2.5" width="12.5" height="10.5" fill="#5ED652" stroke="#1E8A1E" stroke-width="1"/></svg>
<div class="t" style="left:156.86px;top:525.56px;font-size:16px;color:#1E1E1E;transform:scaleX(0.9383);transform-origin:0 0;">InfoData</div>
<svg class="b" style="left:106px;top:551px;" width="9" height="9" viewBox="0 0 9 9"><path d="M8 0 V8 H0 Z" fill="#1E1E1E"/></svg>
<svg class="b" style="left:131px;top:545px;" width="20" height="20" viewBox="0 0 20 20"><rect x="0" y="1" width="20" height="18" fill="#FFFFFF"/><path d="M1 4.5 L17.5 12.5 M17.5 3.5 V13 M14 6 L17 7.5" stroke="#1EF0F8" stroke-width="2.6" fill="none"/><path d="M0 8 L7 10.5 L0 13 Z" fill="#8A8A8A"/></svg>
<div class="t" style="left:157.22px;top:548.56px;font-size:16px;color:#1E1E1E;transform:scaleX(0.8849);transform-origin:0 0;">Drive 1 (Everest XCR Servo Drive)</div>
<svg class="b" style="left:129px;top:573px;" width="8" height="11" viewBox="0 0 8 11"><path d="M1 1 L6.5 5.5 L1 10 Z" fill="none" stroke="#1E1E1E" stroke-width="1.3"/></svg>
<svg class="b" style="left:154px;top:568px;" width="20" height="20" viewBox="0 0 20 20"><rect x="5.5" y="6.5" width="12" height="10.5" fill="#36C030" stroke="#1E8A1E" stroke-width="1"/><rect x="1.5" y="2.5" width="12.5" height="10.5" fill="#5ED652" stroke="#1E8A1E" stroke-width="1"/></svg>
<div class="t" style="left:179.17px;top:571.56px;font-size:16px;color:#1E1E1E;transform:scaleX(0.9333);transform-origin:0 0;">InfoData</div>
<svg class="b" style="left:86px;top:591px;" width="20" height="20" viewBox="0 0 20 20"><path d="M7.5 5.5 H12" stroke="#F2A43A" stroke-width="2.6"/><path d="M11.5 1 L17.5 5.5 L11.5 10 Z" fill="#EE4A2A"/><path d="M-0.5 4.5 H8 M3.75 0.5 V8.5" stroke="#3F9A45" stroke-width="3.4"/><path d="M1 4.5 H6.5 M3.75 2 V7" stroke="#A6D8A0" stroke-width="1"/><rect x="0.5" y="11.5" width="8" height="8.5" fill="#D64856" stroke="#9E1F2B" stroke-width="1"/><rect x="11.5" y="11.5" width="8" height="8.5" fill="#E8E04E" stroke="#D0A030" stroke-width="1"/></svg>
<div class="t" style="left:112.05px;top:594.56px;font-size:16px;color:#1E1E1E;transform:scaleX(0.9515);transform-origin:0 0;">Mappings</div>
<div class="b" style="left:405px;top:55px;width:184px;height:26px;background:#FFF29D"></div>
<div class="t" style="left:410.80px;top:61.80px;font-size:15px;color:#1E1E1E;transform:scaleX(0.9496);transform-origin:0 0;">TwinCAT Project24</div>
<svg class="b" style="left:545px;top:64px;" width="13" height="10" viewBox="0 0 13 10"><path d="M1 5 H5 M5 1.5 V8.5 M5 2 H11 V7.5 H5" stroke="#52483A" stroke-width="1.3" fill="none"/><rect x="5" y="6" width="6" height="1.6" fill="#52483A"/></svg>
<svg class="b" style="left:568px;top:62px;" width="14" height="14" viewBox="0 0 14 14"><path d="M2 2 L12 12 M12 2 L2 12" stroke="#52483A" stroke-width="1.6"/></svg>
<div class="b" style="left:405px;top:81px;width:724px;height:2px;background:#FFF29D"></div>
<div class="b" style="left:405px;top:83px;width:724px;height:515px;background:#F0F0F0"></div>
<div class="b" style="left:405px;top:83px;width:1px;height:515px;background:#9AA7C6"></div>
<div class="b" style="left:406px;top:83px;width:723px;height:1px;background:#A0A0A0"></div>
<div class="b" style="left:406px;top:83px;width:1px;height:515px;background:#A0A0A0"></div>
<div class="b" style="left:407px;top:84px;width:722px;height:1px;background:#696969"></div>
<div class="b" style="left:407px;top:84px;width:1px;height:514px;background:#696969"></div>
<div class="b" style="left:408px;top:85px;width:721px;height:1px;background:#F9F9F9"></div>
<div class="b" style="left:408px;top:85px;width:1px;height:513px;background:#F9F9F9"></div>
<div class="b" style="left:416px;top:116px;width:713px;height:465px;background:#FFFFFF;border-left:1px solid #D9D9D9;border-top:1px solid #D9D9D9;border-bottom:1px solid #D9D9D9;box-sizing:border-box"></div>
<div class="b" style="left:418px;top:96px;width:60px;height:21px;background:#F0F0F0;border:1px solid #D9D9D9;box-sizing:border-box"></div>
<div class="t" style="left:423.35px;top:100.00px;font-size:13px;color:#000;transform:scaleX(1.0533);transform-origin:0 0;">General</div>
<div class="b" style="left:477px;top:96px;width:71px;height:21px;background:#F0F0F0;border:1px solid #D9D9D9;box-sizing:border-box"></div>
<div class="t" style="left:483.49px;top:100.00px;font-size:13px;color:#000;transform:scaleX(1.0145);transform-origin:0 0;">EtherCAT</div>
<div class="b" style="left:547px;top:96px;width:49px;height:21px;background:#F0F0F0;border:1px solid #D9D9D9;box-sizing:border-box"></div>
<div class="t" style="left:553.67px;top:100.00px;font-size:13px;color:#000;transform:scaleX(1.0294);transform-origin:0 0;">DC</div>
<div class="b" style="left:691px;top:96px;width:53px;height:21px;background:#F0F0F0;border:1px solid #D9D9D9;box-sizing:border-box"></div>
<div class="t" style="left:695.30px;top:100.00px;font-size:13px;color:#000;transform:scaleX(1.0049);transform-origin:0 0;">Startup</div>
<div class="b" style="left:743px;top:96px;width:87px;height:21px;background:#F0F0F0;border:1px solid #D9D9D9;box-sizing:border-box"></div>
<div class="t" style="left:749.20px;top:100.00px;font-size:13px;color:#000;transform:scaleX(1.0014);transform-origin:0 0;">CoE - Online</div>
<div class="b" style="left:829px;top:96px;width:49px;height:21px;background:#F0F0F0;border:1px solid #D9D9D9;box-sizing:border-box"></div>
<div class="t" style="left:836.30px;top:100.00px;font-size:13px;color:#000;transform:scaleX(0.9919);transform-origin:0 0;">Online</div>
<div class="b" style="left:595px;top:93px;width:97px;height:24px;background:#FFFFFF;border:1px solid #D9D9D9;border-bottom:none;box-sizing:border-box"></div>
<div class="t" style="left:601.45px;top:98.00px;font-size:13px;color:#000;transform:scaleX(1.0519);transform-origin:0 0;">Process Data</div>
<div class="t" style="left:432.95px;top:133.50px;font-size:13px;color:#000;transform:scaleX(1.0529);transform-origin:0 0;">Sync Manager:</div>
<div class="t" style="left:691.29px;top:134.00px;font-size:13px;color:#000;transform:scaleX(1.0093);transform-origin:0 0;">PDO List:</div>
<div class="t" style="left:433.37px;top:344.00px;font-size:13px;color:#000;transform:scaleX(1.0277);transform-origin:0 0;">PDO Assignment:</div>
<div class="t" style="left:691.20px;top:343.50px;font-size:13px;color:#000;transform:scaleX(1.0038);transform-origin:0 0;">PDO Content:</div>
<div class="b" style="left:434px;top:156px;width:234px;height:174px;background:#FFFFFF;border:1px solid #828790;box-sizing:border-box"></div>
<div class="t" style="left:440.92px;top:164.00px;font-size:13px;color:#000;transform:scaleX(1.0833);transform-origin:0 0;">SM</div>
<div class="t" style="left:475.95px;top:164.00px;font-size:13px;color:#000;transform:scaleX(1.0542);transform-origin:0 0;">Size</div>
<div class="t" style="left:522.50px;top:164.00px;font-size:13px;color:#000;transform:scaleX(1.0929);transform-origin:0 0;">Type</div>
<div class="t" style="left:570.92px;top:164.00px;font-size:13px;color:#000;transform:scaleX(1.0765);transform-origin:0 0;">Fla</div>
<div class="b" style="left:470px;top:158px;width:1px;height:24px;background:#E5E5E5"></div>
<div class="b" style="left:515px;top:158px;width:1px;height:24px;background:#E5E5E5"></div>
<div class="b" style="left:565px;top:158px;width:1px;height:24px;background:#E5E5E5"></div>
<div class="b" style="left:610px;top:158px;width:1px;height:24px;background:#E5E5E5"></div>
<div class="b" style="left:440px;top:202px;width:171px;height:20px;background:#E0FFFF"></div>
<div class="b" style="left:440px;top:242px;width:171px;height:20px;background:#E0FFFF"></div>
<div class="t" style="left:442.00px;top:185.80px;font-size:13px;color:#000;transform:scaleX(0.9429);transform-origin:0 0;">0</div>
<div class="t" style="left:476.49px;top:185.80px;font-size:13px;color:#000;transform:scaleX(1.0100);transform-origin:0 0;">128</div>
<div class="t" style="left:521.44px;top:185.80px;font-size:13px;color:#000;transform:scaleX(1.0609);transform-origin:0 0;">Mbx</div>
<div class="t" style="left:441.75px;top:205.60px;font-size:13px;color:#000;transform:scaleX(0.7500);transform-origin:0 0;">1</div>
<div class="t" style="left:476.49px;top:205.60px;font-size:13px;color:#000;transform:scaleX(1.0100);transform-origin:0 0;">128</div>
<div class="t" style="left:521.49px;top:205.60px;font-size:13px;color:#000;transform:scaleX(1.0059);transform-origin:0 0;">MbxIn</div>
<div class="t" style="left:440.90px;top:225.40px;font-size:13px;color:#000;transform:scaleX(1.1000);transform-origin:0 0;">2</div>
<div class="t" style="left:477.50px;top:225.40px;font-size:13px;color:#000;transform:scaleX(0.9429);transform-origin:0 0;">0</div>
<div class="t" style="left:522.50px;top:225.40px;font-size:13px;color:#000;transform:scaleX(0.9464);transform-origin:0 0;">Outp</div>
<div class="t" style="left:440.90px;top:245.20px;font-size:13px;color:#000;transform:scaleX(1.1000);transform-origin:0 0;">3</div>
<div class="t" style="left:477.50px;top:245.20px;font-size:13px;color:#000;transform:scaleX(0.9429);transform-origin:0 0;">0</div>
<div class="t" style="left:522.03px;top:245.20px;font-size:13px;color:#000;transform:scaleX(0.9735);transform-origin:0 0;">Inputs</div>
<div class="b" style="left:692px;top:156px;width:437px;height:174px;background:#FFFFFF;border:1px solid #828790;border-right:none;box-sizing:border-box"></div>
<div class="t" style="left:699.27px;top:164.00px;font-size:13px;color:#000;transform:scaleX(1.0323);transform-origin:0 0;">Index</div>
<div class="t" style="left:759.46px;top:164.00px;font-size:13px;color:#000;transform:scaleX(1.0417);transform-origin:0 0;">Size</div>
<div class="t" style="left:809.42px;top:164.00px;font-size:13px;color:#000;transform:scaleX(1.0818);transform-origin:0 0;">Name</div>
<div class="t" style="left:989.30px;top:164.00px;font-size:13px;color:#000;transform:scaleX(1.1000);transform-origin:0 0;">Flags</div>
<div class="t" style="left:1068.91px;top:164.00px;font-size:13px;color:#000;transform:scaleX(1.0944);transform-origin:0 0;">SM</div>
<div class="t" style="left:1118.79px;top:164.00px;font-size:13px;color:#000;transform:scaleX(1.2143);transform-origin:0 0;">S</div>
<div class="b" style="left:753px;top:158px;width:1px;height:24px;background:#E5E5E5"></div>
<div class="b" style="left:803px;top:158px;width:1px;height:24px;background:#E5E5E5"></div>
<div class="b" style="left:983px;top:158px;width:1px;height:24px;background:#E5E5E5"></div>
<div class="b" style="left:1063px;top:158px;width:1px;height:24px;background:#E5E5E5"></div>
<div class="b" style="left:1113px;top:158px;width:1px;height:24px;background:#E5E5E5"></div>
<div class="b" style="left:434px;top:364px;width:234px;height:104px;background:#FFFFFF;border:1px solid #828790;box-sizing:border-box"></div>
<div class="b" style="left:692px;top:364px;width:437px;height:104px;background:#FFFFFF;border:1px solid #828790;border-right:none;box-sizing:border-box"></div>
<div class="t" style="left:699.18px;top:372.00px;font-size:13px;color:#000;transform:scaleX(1.0226);transform-origin:0 0;">Index</div>
<div class="t" style="left:759.26px;top:372.00px;font-size:13px;color:#000;transform:scaleX(1.0417);transform-origin:0 0;">Size</div>
<div class="t" style="left:810.50px;top:372.00px;font-size:13px;color:#000;transform:scaleX(0.9478);transform-origin:0 0;">Offs</div>
<div class="t" style="left:859.11px;top:372.00px;font-size:13px;color:#000;transform:scaleX(1.0879);transform-origin:0 0;">Name</div>
<div class="t" style="left:1040.80px;top:372.00px;font-size:13px;color:#000;transform:scaleX(1.0929);transform-origin:0 0;">Type</div>
<div class="t" style="left:1118.88px;top:372.00px;font-size:13px;color:#000;transform:scaleX(1.1250);transform-origin:0 0;">D</div>
<div class="b" style="left:753px;top:366px;width:1px;height:24px;background:#E5E5E5"></div>
<div class="b" style="left:803px;top:366px;width:1px;height:24px;background:#E5E5E5"></div>
<div class="b" style="left:853px;top:366px;width:1px;height:24px;background:#E5E5E5"></div>
<div class="b" style="left:1033px;top:366px;width:1px;height:24px;background:#E5E5E5"></div>
<div class="b" style="left:1113px;top:366px;width:1px;height:24px;background:#E5E5E5"></div>
<div class="b" style="left:434px;top:488px;width:234px;height:75px;border:1px solid #DCDCDC;box-sizing:border-box"></div>
<div class="b" style="left:440px;top:482px;width:66px;height:12px;background:#FFFFFF"></div>
<div class="t" style="left:442.53px;top:482.00px;font-size:13px;color:#000;transform:scaleX(1.0714);transform-origin:0 0;">Download</div>
<div class="b" style="left:450px;top:504px;width:16px;height:16px;background:#FFFFFF;border:1px solid #333333;box-sizing:border-box"></div>
<svg class="b" style="left:450px;top:504px;" width="16" height="16" viewBox="0 0 16 16"><path d="M3.5 8 L6.5 11 L12.5 4.5" stroke="#444444" stroke-width="1.1" fill="none"/></svg>
<div class="t" style="left:468.47px;top:505.50px;font-size:13px;color:#000;transform:scaleX(1.0337);transform-origin:0 0;">PDO Assignment</div>
<div class="b" style="left:450px;top:530px;width:16px;height:16px;background:#FFFFFF;border:1px solid #333333;box-sizing:border-box"></div>
<svg class="b" style="left:450px;top:530px;" width="16" height="16" viewBox="0 0 16 16"><path d="M3.5 8 L6.5 11 L12.5 4.5" stroke="#444444" stroke-width="1.1" fill="none"/></svg>
<div class="t" style="left:468.49px;top:531.00px;font-size:13px;color:#000;transform:scaleX(1.0074);transform-origin:0 0;">PDO Configuration</div>
<div class="b" style="left:692px;top:478px;width:437px;height:24px;background:#CCCCCC;border:1px solid #BFBFBF;border-right:none;box-sizing:border-box"></div>
<div class="t" style="left:695.48px;top:484.00px;font-size:13px;color:#6D6D6D;transform:scaleX(1.0225);transform-origin:0 0;">Predefined PDO Assignment: (none)</div>
<div class="b" style="left:693px;top:511px;width:436px;height:22px;background:#E1E1E1;border:1px solid #ADADAD;border-right:none;box-sizing:border-box"></div>
<div class="t" style="left:694.38px;top:516.00px;font-size:13px;color:#000;transform:scaleX(1.0219);transform-origin:0 0;">Load PDO info from device</div>
<div class="b" style="left:693px;top:541px;width:436px;height:22px;background:#E1E1E1;border:1px solid #ADADAD;border-right:none;box-sizing:border-box"></div>
<div class="t" style="left:694.39px;top:546.00px;font-size:13px;color:#000;transform:scaleX(1.0126);transform-origin:0 0;">Sync Unit Assignment...</div>
<div class="b" style="left:405px;top:598px;width:724px;height:117px;background:#FFFFFF"></div>
<div class="b" style="left:405px;top:598px;width:724px;height:5px;background:#F0F0F0"></div>
<div class="b" style="left:405px;top:598px;width:724px;height:1px;background:#FCFCFC"></div>
<div class="b" style="left:405px;top:598px;width:1px;height:117px;background:#9AA7C6"></div>
<div class="b" style="left:406px;top:603px;width:723px;height:1px;background:#A0A0A0"></div>
<div class="b" style="left:406px;top:603px;width:1px;height:112px;background:#A0A0A0"></div>
<div class="b" style="left:407px;top:604px;width:722px;height:1px;background:#696969"></div>
<div class="b" style="left:407px;top:604px;width:1px;height:111px;background:#696969"></div>
<div class="t" style="left:413.76px;top:610.96px;font-size:16px;color:#1E1E1E;transform:scaleX(0.9439);transform-origin:0 0;">Name</div>
<div class="t" style="left:553.27px;top:610.96px;font-size:16px;color:#1E1E1E;transform:scaleX(0.9333);transform-origin:0 0;">Online</div>
<div class="t" style="left:674.70px;top:610.96px;font-size:16px;color:#1E1E1E;transform:scaleX(0.8882);transform-origin:0 0;">Type</div>
<div class="t" style="left:753.65px;top:610.96px;font-size:16px;color:#1E1E1E;transform:scaleX(0.8533);transform-origin:0 0;">Size</div>
<div class="t" style="left:804.09px;top:610.96px;font-size:16px;color:#1E1E1E;transform:scaleX(0.9150);transform-origin:0 0;">&gt;Ad...</div>
<div class="t" style="left:861.42px;top:610.96px;font-size:16px;color:#1E1E1E;transform:scaleX(0.9793);transform-origin:0 0;">In/O</div>
<div class="t" style="left:911.43px;top:610.96px;font-size:16px;color:#1E1E1E;transform:scaleX(0.8667);transform-origin:0 0;">User</div>
<div class="t" style="left:961.45px;top:610.96px;font-size:16px;color:#1E1E1E;transform:scaleX(0.9492);transform-origin:0 0;">Linked to</div>
<div class="b" style="left:527px;top:605px;width:1px;height:26px;background:#E5E5E5"></div>
<div class="b" style="left:547px;top:605px;width:1px;height:26px;background:#E5E5E5"></div>
<div class="b" style="left:667px;top:605px;width:1px;height:26px;background:#E5E5E5"></div>
<div class="b" style="left:747px;top:605px;width:1px;height:26px;background:#E5E5E5"></div>
<div class="b" style="left:797px;top:605px;width:1px;height:26px;background:#E5E5E5"></div>
<div class="b" style="left:855px;top:605px;width:1px;height:26px;background:#E5E5E5"></div>
<div class="b" style="left:905px;top:605px;width:1px;height:26px;background:#E5E5E5"></div>
<div class="b" style="left:955px;top:605px;width:1px;height:26px;background:#E5E5E5"></div>
<div class="b" style="left:1105px;top:605px;width:1px;height:26px;background:#E5E5E5"></div>
<svg class="b" style="left:413px;top:638px;" width="13" height="10" viewBox="0 0 13 10"><rect x="4" y="1" width="8" height="8" fill="#F5DB3A" stroke="#C9A526" stroke-width="0.8"/><path d="M0 5 H6 M4 2.5 L7 5 L4 7.5" stroke="#E8361E" stroke-width="1.8" fill="none"/></svg>
<div class="t" style="left:429.38px;top:635.96px;font-size:16px;color:#1E1E1E;transform:scaleX(0.9167);transform-origin:0 0;">State</div>
<div class="t" style="left:553.49px;top:635.96px;font-size:16px;color:#1E1E1E;transform:scaleX(1.0143);transform-origin:0 0;">2</div>
<div class="t" style="left:673.81px;top:635.96px;font-size:16px;color:#1E1E1E;transform:scaleX(0.8889);transform-origin:0 0;">UINT</div>
<div class="t" style="left:753.64px;top:635.96px;font-size:16px;color:#1E1E1E;transform:scaleX(0.8571);transform-origin:0 0;">2.0</div>
<div class="t" style="left:804.13px;top:635.96px;font-size:16px;color:#1E1E1E;transform:scaleX(0.8667);transform-origin:0 0;">1548.0</div>
<div class="t" style="left:861.45px;top:635.96px;font-size:16px;color:#1E1E1E;transform:scaleX(0.9514);transform-origin:0 0;">Input</div>
<div class="t" style="left:911.80px;top:635.96px;font-size:16px;color:#1E1E1E;transform:scaleX(0.9111);transform-origin:0 0;">0</div>
<svg class="b" style="left:413px;top:662px;" width="13" height="10" viewBox="0 0 13 10"><rect x="4" y="1" width="8" height="8" fill="#F5DB3A" stroke="#C9A526" stroke-width="0.8"/><path d="M0 5 H6 M4 2.5 L7 5 L4 7.5" stroke="#E8361E" stroke-width="1.8" fill="none"/></svg>
<div class="t" style="left:430.50px;top:659.96px;font-size:16px;color:#1E1E1E;transform:scaleX(0.9344);transform-origin:0 0;">AdsAddr</div>
<div class="t" style="left:554.36px;top:659.96px;font-size:16px;color:#1E1E1E;transform:scaleX(0.8407);transform-origin:0 0;">192.168.1.163....</div>
<div class="t" style="left:674.70px;top:659.96px;font-size:16px;color:#1E1E1E;transform:scaleX(0.9018);transform-origin:0 0;">AMSAD</div>
<div class="t" style="left:753.64px;top:659.96px;font-size:16px;color:#1E1E1E;transform:scaleX(0.8571);transform-origin:0 0;">8.0</div>
<div class="t" style="left:804.13px;top:659.96px;font-size:16px;color:#1E1E1E;transform:scaleX(0.8667);transform-origin:0 0;">1550.0</div>
<div class="t" style="left:861.45px;top:659.96px;font-size:16px;color:#1E1E1E;transform:scaleX(0.9514);transform-origin:0 0;">Input</div>
<div class="t" style="left:911.80px;top:659.96px;font-size:16px;color:#1E1E1E;transform:scaleX(0.9111);transform-origin:0 0;">0</div>
<svg class="b" style="left:413px;top:686px;" width="13" height="10" viewBox="0 0 13 10"><rect x="4" y="1" width="8" height="8" fill="#F5DB3A" stroke="#C9A526" stroke-width="0.8"/><path d="M0 5 H6 M4 2.5 L7 5 L4 7.5" stroke="#E8361E" stroke-width="1.8" fill="none"/></svg>
<div class="t" style="left:429.63px;top:683.96px;font-size:16px;color:#1E1E1E;transform:scaleX(0.8676);transform-origin:0 0;">Chn0</div>
<div class="t" style="left:554.50px;top:683.96px;font-size:16px;color:#1E1E1E;transform:scaleX(0.7889);transform-origin:0 0;">0</div>
<div class="t" style="left:673.87px;top:683.96px;font-size:16px;color:#1E1E1E;transform:scaleX(0.8298);transform-origin:0 0;">USINT</div>
<div class="t" style="left:754.69px;top:683.96px;font-size:16px;color:#1E1E1E;transform:scaleX(0.8095);transform-origin:0 0;">1.0</div>
<div class="t" style="left:804.13px;top:683.96px;font-size:16px;color:#1E1E1E;transform:scaleX(0.8667);transform-origin:0 0;">1558.0</div>
<div class="t" style="left:861.45px;top:683.96px;font-size:16px;color:#1E1E1E;transform:scaleX(0.9514);transform-origin:0 0;">Input</div>
<div class="t" style="left:911.80px;top:683.96px;font-size:16px;color:#1E1E1E;transform:scaleX(0.9111);transform-origin:0 0;">0</div>
<svg class="b" style="left:0;top:0" width="1129" height="715" viewBox="0 0 1129 715">
<path d="M 131 542 C 138 540, 150 537, 175 536 C 220 534, 280 537, 330 538.5 C 355 540, 372 544, 378 549 C 384 555, 381 562, 372 566 C 355 569, 335 570, 300 570 C 250 571, 200 575, 155 576 C 135 576.5, 122 570, 118 564 C 117 556, 123 548, 140 541" fill="none" stroke="#F50A0A" stroke-width="2.8" stroke-linecap="round"/>
<path d="M 697 504.5 C 705 503, 712 505, 722 506.5 C 745 509, 775 508.5, 800 507.5 C 825 506.5, 842 506, 852 511 C 862 516, 868 520, 865 524 C 862 528, 845 530, 820 533 C 790 536, 760 536.5, 735 536 C 710 535, 695 532, 690 527 C 685 522, 687 515, 692 509 C 694 506, 696 505, 700 504" fill="none" stroke="#F50A0A" stroke-width="2.8" stroke-linecap="round"/>
</svg>
</body></html>
